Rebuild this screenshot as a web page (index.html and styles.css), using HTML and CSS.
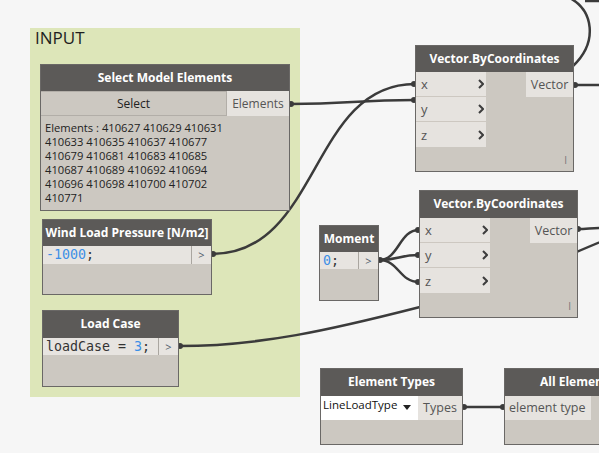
FILE: index.html
```html
<!DOCTYPE html>
<html lang="en">

<head>
  <meta charset="UTF-8">
  <meta name="viewport" content="width=device-width, initial-scale=1.0">
  <title>Dynamo - Wind Load</title>
  <link rel="stylesheet" href="styles.css">
</head>

<body>
  <div class="canvas">
    <!-- grupo de entradas -->
    <div class="group">
      <span class="group-title">INPUT</span>
    </div>

    <!-- cables entre nodos -->
    <svg class="wires" width="599" height="453" viewBox="0 0 599 453">
      <g fill="none" stroke="#3b3b3b" stroke-width="2.5">
        <path d="M290,104 C350,104 355,100 415,100" />
        <path d="M212,254 C320,254 310,84 415,84" />
        <path d="M179,346 C260,346 330,330 420,307 S560,258 610,238" />
        <path d="M379,260 C399,260 399,230 419,230" />
        <path d="M379,260 C399,260 399,255 419,255" />
        <path d="M379,260 C399,260 399,282 419,282" />
        <path d="M574,85 L600,85" />
        <path d="M577,229 C588,229 590,228 600,228" />
        <path d="M573,66 C598,42 594,10 568,-3" />
        <path d="M585,1 L600,1" />
        <path d="M463,407 L504,407" />
      </g>
      <g fill="#3b3b3b">
        <circle cx="291" cy="104" r="3" />
        <circle cx="414" cy="100" r="3" />
        <circle cx="213" cy="254" r="3" />
        <circle cx="414" cy="84" r="3" />
        <circle cx="180" cy="346" r="3" />
        <circle cx="380" cy="260" r="3" />
        <circle cx="418" cy="230" r="3" />
        <circle cx="418" cy="255" r="3" />
        <circle cx="418" cy="282" r="3" />
        <circle cx="575" cy="85" r="3" />
        <circle cx="578" cy="229" r="3" />
        <circle cx="464" cy="407" r="3" />
        <circle cx="503" cy="407" r="3" />
      </g>
    </svg>

    <!-- Select Model Elements -->
    <div class="node node-select">
      <div class="node-head">Select Model Elements</div>
      <div class="select-row">
        <div class="select-btn">Select</div>
        <div class="port-out">Elements</div>
      </div>
      <div class="select-list">
        Elements : 410627 410629 410631<br>
        410633 410635 410637 410677<br>
        410679 410681 410683 410685<br>
        410687 410689 410692 410694<br>
        410696 410698 410700 410702<br>
        410771
      </div>
    </div>

    <!-- Code blocks -->
    <div class="node node-wind">
      <div class="node-head">Wind Load Pressure [N/m2]</div>
      <div class="code-row">
        <div class="code"><span class="num">-1000</span>;</div>
        <div class="code-port">&gt;</div>
      </div>
    </div>

    <div class="node node-case">
      <div class="node-head">Load Case</div>
      <div class="code-row">
        <div class="code">loadCase = <span class="num">3</span>;</div>
        <div class="code-port">&gt;</div>
      </div>
    </div>

    <div class="node node-moment">
      <div class="node-head">Moment</div>
      <div class="code-row">
        <div class="code"><span class="num">0</span>;</div>
        <div class="code-port">&gt;</div>
      </div>
    </div>

    <!-- Vector.ByCoordinates (1) -->
    <div class="node node-vec1">
      <div class="node-head">Vector.ByCoordinates</div>
      <div class="node-body">
        <div class="inputs">
          <div class="port-in"><span>x</span><svg class="chev" width="6" height="10" viewBox="0 0 6 10"><path d="M1,1 L5,5 L1,9" /></svg></div>
          <div class="port-in"><span>y</span><svg class="chev" width="6" height="10" viewBox="0 0 6 10"><path d="M1,1 L5,5 L1,9" /></svg></div>
          <div class="port-in"><span>z</span><svg class="chev" width="6" height="10" viewBox="0 0 6 10"><path d="M1,1 L5,5 L1,9" /></svg></div>
        </div>
        <div class="outputs">
          <div class="port-vec">Vector</div>
        </div>
      </div>
      <span class="lacing">I</span>
    </div>

    <!-- Vector.ByCoordinates (2) -->
    <div class="node node-vec2">
      <div class="node-head">Vector.ByCoordinates</div>
      <div class="node-body">
        <div class="inputs">
          <div class="port-in"><span>x</span><svg class="chev" width="6" height="10" viewBox="0 0 6 10"><path d="M1,1 L5,5 L1,9" /></svg></div>
          <div class="port-in"><span>y</span><svg class="chev" width="6" height="10" viewBox="0 0 6 10"><path d="M1,1 L5,5 L1,9" /></svg></div>
          <div class="port-in"><span>z</span><svg class="chev" width="6" height="10" viewBox="0 0 6 10"><path d="M1,1 L5,5 L1,9" /></svg></div>
        </div>
        <div class="outputs">
          <div class="port-vec">Vector</div>
        </div>
      </div>
      <span class="lacing">I</span>
    </div>

    <!-- Element Types -->
    <div class="node node-types">
      <div class="node-head">Element Types</div>
      <div class="types-row">
        <div class="dropdown">
          <span>LineLoadType</span>
          <svg width="8" height="5" viewBox="0 0 8 5"><path d="M0,0 L8,0 L4,5 Z" fill="#222" /></svg>
        </div>
        <div class="port-types">Types</div>
      </div>
    </div>

    <!-- All Elements of Type (cortado por el borde) -->
    <div class="node node-all">
      <div class="node-head head-left">All Elemen</div>
      <div class="types-row">
        <div class="port-elem">element type</div>
      </div>
    </div>
  </div>
</body>

</html>
```

FILE: styles.css
```css
* {
  margin: 0;
  padding: 0;
  box-sizing: border-box;
}

body {
  background: #f6f6f6;
  font-family: "Open Sans", "Noto Sans", sans-serif;
  overflow: hidden;
}

/* Lienzo libre: los nodos se colocan por coordenadas */
.canvas {
  position: relative;
  width: 599px;
  height: 453px;
  overflow: hidden;
}

.group {
  position: absolute;
  left: 30px;
  top: 28px;
  width: 270px;
  height: 369px;
  background: #dde6b9;
}

.group-title {
  display: block;
  padding: 0 0 0 5px;
  font-size: 17px;
  line-height: 20px;
  color: #1f1f1f;
}

.wires {
  position: absolute;
  left: 0;
  top: 0;
}

/* Nodo generico */
.node {
  position: absolute;
  background: #ccc8c1;
  border: 1px solid #6a6866;
  display: flex;
  flex-direction: column;
  overflow: hidden;
}

.node-head {
  background: #5c5a58;
  color: #fff;
  font-weight: 700;
  font-size: 12px;
  text-align: center;
  height: 26px;
  line-height: 25px;
  flex-shrink: 0;
  white-space: nowrap;
}

/* Select Model Elements */
.node-select {
  left: 40px;
  top: 64px;
  width: 250px;
  height: 147px;
}

.select-row {
  display: flex;
  height: 25px;
}

.select-btn {
  flex: 1;
  text-align: center;
  font-size: 12px;
  line-height: 23px;
  color: #222;
  border: 1px solid #b2aea8;
  border-left: none;
}

.port-out {
  width: 62px;
  background: #e6e3df;
  color: #555;
  font-size: 12px;
  line-height: 25px;
  text-align: center;
}

.select-list {
  padding: 5px 4px;
  font-size: 11.2px;
  line-height: 14px;
  color: #222;
}

/* Code blocks */
.node-wind {
  left: 42px;
  top: 219px;
  width: 170px;
  height: 76px;
}

.node-case {
  left: 42px;
  top: 310px;
  width: 137px;
  height: 77px;
}

.node-case .node-head {
  height: 27px;
  line-height: 26px;
}

.node-moment {
  left: 319px;
  top: 225px;
  width: 60px;
  height: 76px;
}

.code-row {
  display: flex;
  height: 18px;
  background: #e7e4e0;
}

.node-case .code-row,
.node-moment .code-row {
  height: 17px;
}

.code {
  flex: 1;
  padding-left: 3px;
  font-family: "DejaVu Sans Mono", "Liberation Mono", monospace;
  font-size: 13.3px;
  line-height: 18px;
  color: #333;
  white-space: nowrap;
}

.code .num {
  color: #3c8fe6;
}

.code-port {
  width: 20px;
  border-left: 1px solid #aaa6a0;
  font-size: 11px;
  line-height: 17px;
  text-align: center;
  color: #4d5a6a;
}

/* Vector.ByCoordinates */
.node-vec1 {
  left: 415px;
  top: 45px;
  width: 159px;
  height: 127px;
}

.node-vec2 {
  left: 419px;
  top: 190px;
  width: 159px;
  height: 128px;
}

.node-vec2 .node-head {
  height: 27px;
  line-height: 26px;
}

.node-body {
  display: flex;
  justify-content: space-between;
}

.inputs {
  width: 70px;
  display: flex;
  flex-direction: column;
}

.port-in {
  height: 25px;
  background: #e6e3df;
  border-bottom: 1px solid #cdc8c1;
  display: flex;
  align-items: center;
  justify-content: space-between;
  padding: 0 2px 0 5px;
  font-size: 13px;
  color: #555;
}

.port-in:last-child {
  border-bottom: none;
}

.chev path {
  fill: none;
  stroke: #3d3d3d;
  stroke-width: 2;
}

.port-vec {
  width: 47px;
  height: 25px;
  background: #e6e3df;
  font-size: 12.5px;
  line-height: 25px;
  color: #555;
  text-align: center;
}

.lacing {
  position: absolute;
  right: 6px;
  bottom: 4px;
  font-size: 10px;
  color: #777;
}

/* Element Types */
.node-types {
  left: 320px;
  top: 368px;
  width: 143px;
  height: 77px;
}

.node-types .node-head,
.node-all .node-head {
  height: 27px;
  line-height: 26px;
}

.types-row {
  display: flex;
  height: 24px;
}

.dropdown {
  width: 97px;
  background: #fff;
  display: flex;
  align-items: flex-start;
  justify-content: space-between;
  padding: 1px 7px 0 2px;
  font-size: 11.5px;
  line-height: 16px;
  color: #111;
}

.dropdown svg {
  margin-top: 8px;
}

.port-types {
  flex: 1;
  background: #e6e3df;
  font-size: 12.5px;
  line-height: 24px;
  text-align: center;
  color: #555;
}

.node-all {
  left: 504px;
  top: 368px;
  width: 160px;
  height: 77px;
}

.head-left {
  text-align: left;
  padding-left: 35px;
}

.port-elem {
  width: 86px;
  background: #e6e3df;
  font-size: 12.5px;
  line-height: 24px;
  padding-left: 4px;
  color: #555;
}
```
